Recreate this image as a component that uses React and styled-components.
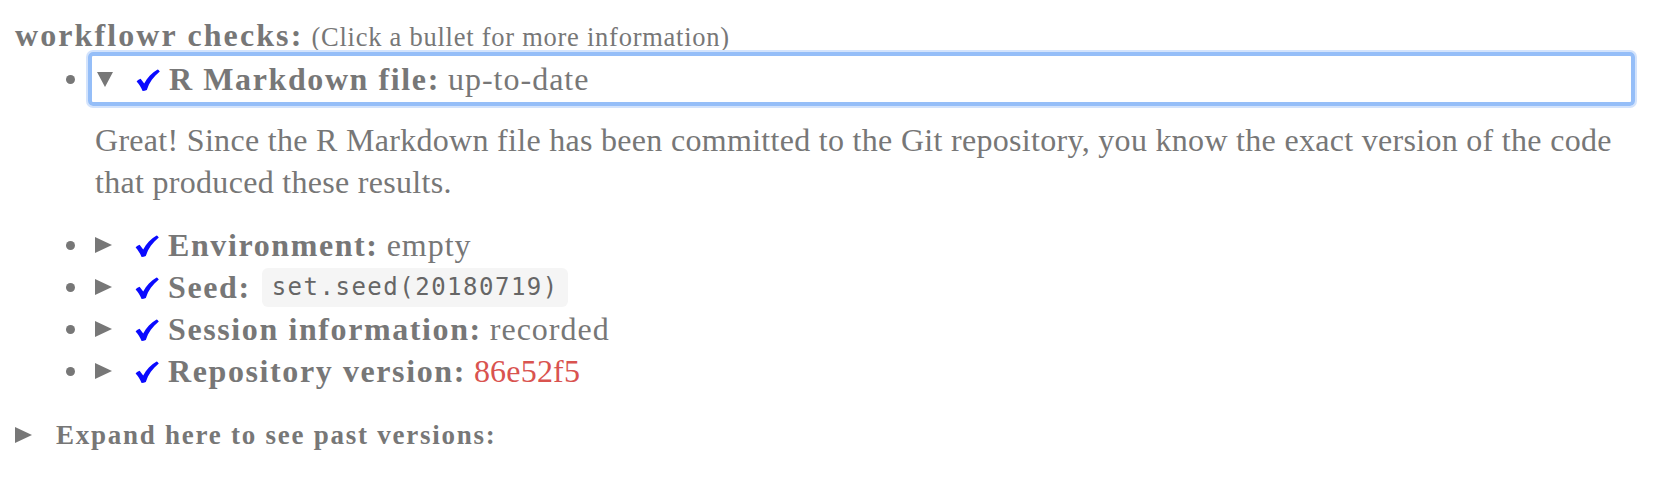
import React from "react";
import styled, { createGlobalStyle } from "styled-components";

const GlobalStyle = createGlobalStyle`
  html, body {
    margin: 0;
    padding: 0;
    background: #fff;
  }
  body {
    font-family: "Liberation Serif", "DejaVu Serif", serif;
    color: #777;
  }
`;

const Page = styled.div`
  padding: 21px 15px 20px;
  font-size: 32px;
  line-height: 42px;
`;

const Heading = styled.div`
  line-height: 28px;
  white-space: nowrap;
  strong {
    font-size: 32px;
    font-weight: 700;
    letter-spacing: 2.1px;
  }
  small {
    font-size: 26.5px;
    letter-spacing: 0.75px;
  }
`;

const CheckList = styled.ul`
  margin: 1px 0 0;
  padding: 0 0 0 49px;
  list-style: none;
`;

const Item = styled.li`
  display: grid;
  grid-template-columns: 26px 1fr;
  align-items: center;
  margin: 0;
`;

const Bullet = styled.span`
  width: 9px;
  height: 9px;
  margin-left: 2px;
  border-radius: 50%;
  background: #777;
`;

const Summary = styled.div`
  box-sizing: border-box;
  display: flex;
  align-items: center;
  white-space: nowrap;
  cursor: pointer;
  ${(p) =>
    p.$focused
      ? `height: 54px;
         margin: 0 16px 0 -2px;
         padding-left: 5px;
         border: 4px solid #95bef8;
         border-radius: 5px;
         box-shadow: 0 0 0 2px #d3e3fc;`
      : `height: 42px;
         padding-left: 5px;`}
`;

const Arrow = styled.span`
  flex: none;
  display: inline-block;
  width: 0;
  height: 0;
  margin-right: 23px;
  ${(p) =>
    p.$open
      ? `border-left: 8px solid transparent;
         border-right: 8px solid transparent;
         border-top: 15px solid #777;`
      : `border-top: 8.5px solid transparent;
         border-bottom: 8.5px solid transparent;
         border-left: 17px solid #777;`}
`;

const CheckIcon = styled.svg`
  flex: none;
  width: 24px;
  height: 22px;
  margin-right: 9px;
  margin-top: 1px;
`;

const Check = () => (
  <CheckIcon viewBox="0 0 24 22">
    <path
      d="M0.6 12.6 C1.8 11.2 3.2 10.2 4.6 9.8 L8.2 14.6 C11.4 8.4 15.8 3.8 21.6 0.5 C22.4 0.7 23.3 1.6 23.8 2.6 C17.6 7.6 13.2 13.6 10.8 21 C9.4 21.6 8 21.9 6.6 21.9 C5 18.4 3 15.2 0.6 12.6 Z"
      fill="#0a0aff"
    />
  </CheckIcon>
);

const Label = styled.strong`
  font-weight: 700;
  letter-spacing: 1.6px;
  margin-right: 8px;
`;

const Value = styled.span`
  letter-spacing: ${(p) => (p.$danger ? "0.2px" : "1px")};
  color: ${(p) => (p.$danger ? "#d9534f" : "inherit")};
`;

const Code = styled.code`
  display: inline-block;
  font-family: "DejaVu Sans Mono", monospace;
  font-size: 24px;
  line-height: 33px;
  letter-spacing: 1.5px;
  background: #f5f5f5;
  border-radius: 6px;
  padding: 3px 9px 3px 10px;
  margin-left: 3px;
  color: #666;
`;

const Detail = styled.p`
  grid-column: 2;
  margin: 13px 30px 21px 5px;
  line-height: 42px;
  letter-spacing: 0.3px;
`;

const Expand = styled.div`
  display: flex;
  align-items: center;
  height: 42px;
  margin-top: 22px;
  font-size: 27px;
  font-weight: 700;
  letter-spacing: 1.75px;
  ${Arrow} {
    margin-right: 24px;
  }
`;

const checks = [
  { label: "R Markdown file:", value: "up-to-date", open: true },
  { label: "Environment:", value: "empty" },
  { label: "Seed:", code: "set.seed(20180719)" },
  { label: "Session information:", value: "recorded" },
  { label: "Repository version:", value: "86e52f5", danger: true },
];

export default function App() {
  return (
    <Page>
      <GlobalStyle />
      <Heading>
        <strong>workflowr checks:</strong> <small>(Click a bullet for more information)</small>
      </Heading>
      <CheckList>
        {checks.map((c) => (
          <Item key={c.label}>
            <Bullet />
            <Summary $focused={c.open}>
              <Arrow $open={c.open} />
              <Check />
              <Label>{c.label}</Label>
              {c.code ? <Code>{c.code}</Code> : <Value $danger={c.danger}>{c.value}</Value>}
            </Summary>
            {c.open && (
              <Detail>
                Great! Since the R Markdown file has been committed to the Git repository, you know
                the exact version of the code that produced these results.
              </Detail>
            )}
          </Item>
        ))}
      </CheckList>
      <Expand>
        <Arrow />
        Expand here to see past versions:
      </Expand>
    </Page>
  );
}
